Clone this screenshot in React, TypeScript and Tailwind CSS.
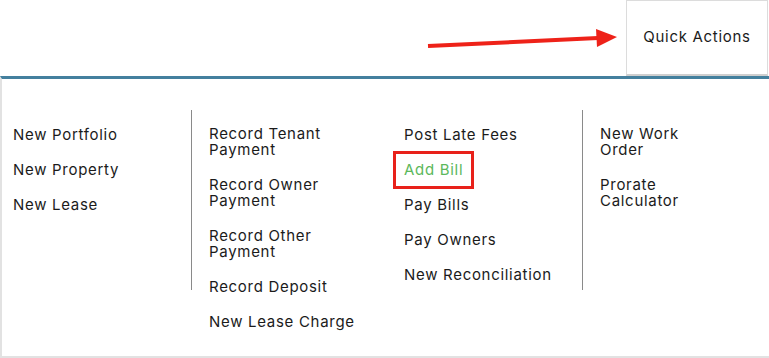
const columns: { label: string; active?: boolean }[][] = [
  [{ label: "New Portfolio" }, { label: "New Property" }, { label: "New Lease" }],
  [
    { label: "Record Tenant Payment" },
    { label: "Record Owner Payment" },
    { label: "Record Other Payment" },
    { label: "Record Deposit" },
    { label: "New Lease Charge" },
  ],
  [
    { label: "Post Late Fees" },
    { label: "Add Bill", active: true },
    { label: "Pay Bills" },
    { label: "Pay Owners" },
    { label: "New Reconciliation" },
  ],
  [{ label: "New Work Order" }, { label: "Prorate Calculator" }],
];

function Column({ items, width }: { items: { label: string; active?: boolean }[]; width: string }) {
  return (
    <ul className={`flex flex-col gap-[19px] ${width}`}>
      {items.map((item) => (
        <li key={item.label} className="leading-[16px]">
          {item.active ? (
            <span className="-mx-[11px] -my-[11px] inline-block border-[3px] border-[#e8211a] px-[8px] py-[8px] text-[#5cb85c]">
              {item.label}
            </span>
          ) : (
            <a href="#" className="text-[#1b1b1b]">
              {item.label}
            </a>
          )}
        </li>
      ))}
    </ul>
  );
}

function Divider() {
  return <div className="mt-[-16px] h-[180px] w-px shrink-0 bg-[#8a8a8a]" />;
}

export default function App() {
  return (
    <div
      className="h-[358px] w-[769px] overflow-hidden bg-white text-[15px] tracking-[0.7px]"
      style={{ fontFamily: "Inter, 'Noto Sans', sans-serif" }}
    >
      <div className="relative flex h-[76px] justify-end">
        <svg className="absolute left-[426px] top-[28px]" width="194" height="22" viewBox="0 0 194 22">
          <line x1="2" y1="18" x2="172" y2="10" stroke="#ee2219" strokeWidth="4" />
          <polygon points="170,1 191,9 171,19" fill="#ee2219" />
        </svg>
        <button className="mr-[1px] h-[76px] w-[142px] border border-b-2 border-[#dcdcdc] border-b-[#cfcfcf] bg-white text-[#1b1b1b]">
          Quick Actions
        </button>
      </div>
      <div className="h-[282px] border-l-2 border-b-2 border-t-[3px] border-l-[#e2e2e2] border-b-[#e2e2e2] border-t-[#44809e] pt-[47px]">
        <div className="flex">
          <div className="w-[189px] shrink-0 pl-[11px] pt-[1px]">
            <Column items={columns[0]} width="w-[160px]" />
          </div>
          <Divider />
          <div className="w-[195px] shrink-0 pl-[17px]">
            <Column items={columns[1]} width="w-[160px]" />
          </div>
          <div className="w-[195px] shrink-0 pl-[17px] pt-[1px]">
            <Column items={columns[2]} width="w-[160px]" />
          </div>
          <Divider />
          <div className="pl-[17px]">
            <Column items={columns[3]} width="w-[110px]" />
          </div>
        </div>
      </div>
    </div>
  );
}
